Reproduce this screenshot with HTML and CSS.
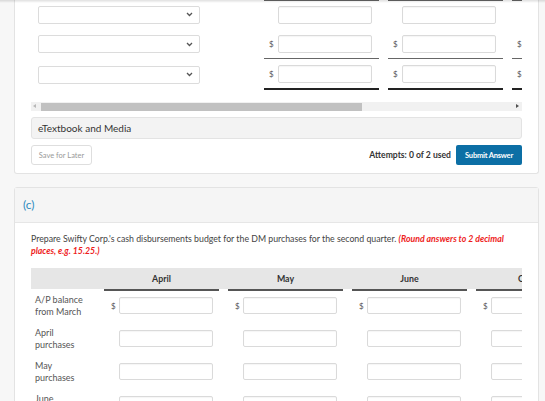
FILE: index.html
```html
<!DOCTYPE html>
<html lang="en">

<head>
 <meta charset="UTF-8">
 <meta name="viewport" content="width=device-width, initial-scale=1.0">
 <title>Cash disbursements budget</title>
 <link rel="stylesheet" href="styles.css">
</head>

<body>
 <div class="topshade"></div>

 <main class="page">

  <section class="card card-top">
   <div class="clip">
    <div class="srow first">
     <div class="lab"><div class="select"><svg width="7" height="5" viewBox="0 0 7 5"><path d="M1 1l2.5 2.5L6 1" fill="none" stroke="#555" stroke-width="1.3"/></svg></div></div>
     <div class="amt"><span class="cur"></span><input class="box" type="text"></div>
     <div class="amt"><span class="cur"></span><input class="box" type="text"></div>
     <div class="amt"><span class="cur"></span></div>
    </div>
    <div class="srow sub">
     <div class="lab"><div class="select"><svg width="7" height="5" viewBox="0 0 7 5"><path d="M1 1l2.5 2.5L6 1" fill="none" stroke="#555" stroke-width="1.3"/></svg></div></div>
     <div class="amt"><span class="cur">$</span><input class="box" type="text"></div>
     <div class="amt"><span class="cur">$</span><input class="box" type="text"></div>
     <div class="amt"><span class="cur">$</span></div>
    </div>
    <div class="srow total">
     <div class="lab"><div class="select"><svg width="7" height="5" viewBox="0 0 7 5"><path d="M1 1l2.5 2.5L6 1" fill="none" stroke="#555" stroke-width="1.3"/></svg></div></div>
     <div class="amt"><span class="cur">$</span><input class="box" type="text"></div>
     <div class="amt"><span class="cur">$</span><input class="box" type="text"></div>
     <div class="amt"><span class="cur">$</span></div>
    </div>
   </div>

   <div class="hbar">
    <span class="arr arr-left"></span>
    <span class="thumb"></span>
    <span class="arr arr-right"></span>
   </div>

   <div class="media">eTextbook and Media</div>

   <div class="actions">
    <button class="btn-save" type="button">Save for Later</button>
    <div class="submit-group">
     <span class="attempts">Attempts: 0 of 2 used</span>
     <button class="btn-submit" type="button">Submit Answer</button>
    </div>
   </div>
  </section>

  <section class="card card-c">
   <header class="part-head">(c)</header>
   <div class="part-body">
    <p class="prompt">Prepare Swifty Corp.'s cash disbursements budget for the DM purchases for the second quarter. <em class="hint">(Round answers to 2 decimal places, e.g. 15.25.)</em></p>

    <div class="clip">
     <div class="thead">
      <div class="tlab"></div>
      <div class="col">April</div>
      <div class="col">May</div>
      <div class="col">June</div>
      <div class="col">Quarter</div>
     </div>
     <div class="trow">
      <div class="tlab">A/P balance<br>from March</div>
      <div class="col"><span class="cur">$</span><input class="box" type="text"></div>
      <div class="col"><span class="cur">$</span><input class="box" type="text"></div>
      <div class="col"><span class="cur">$</span><input class="box" type="text"></div>
      <div class="col"><span class="cur">$</span><input class="box" type="text"></div>
     </div>
     <div class="trow">
      <div class="tlab">April<br>purchases</div>
      <div class="col"><span class="cur"></span><input class="box" type="text"></div>
      <div class="col"><span class="cur"></span><input class="box" type="text"></div>
      <div class="col"><span class="cur"></span><input class="box" type="text"></div>
      <div class="col"><span class="cur"></span><input class="box" type="text"></div>
     </div>
     <div class="trow">
      <div class="tlab">May<br>purchases</div>
      <div class="col"><span class="cur"></span><input class="box" type="text"></div>
      <div class="col"><span class="cur"></span><input class="box" type="text"></div>
      <div class="col"><span class="cur"></span><input class="box" type="text"></div>
      <div class="col"><span class="cur"></span><input class="box" type="text"></div>
     </div>
     <div class="trow">
      <div class="tlab">June<br>purchases</div>
      <div class="col"><span class="cur"></span><input class="box" type="text"></div>
      <div class="col"><span class="cur"></span><input class="box" type="text"></div>
      <div class="col"><span class="cur"></span><input class="box" type="text"></div>
      <div class="col"><span class="cur"></span><input class="box" type="text"></div>
     </div>
    </div>
   </div>
  </section>

 </main>
</body>

</html>
```

FILE: styles.css
```css
*,
*::before,
*::after {
 box-sizing: border-box;
}

body {
 margin: 0;
 background: #f7f7f7;
 font-family: Lato, 'Open Sans', 'Liberation Sans', sans-serif;
 color: #333;
 overflow: hidden;
}

.topshade {
 position: fixed;
 top: 0;
 left: 0;
 right: 0;
 height: 3px;
 background: linear-gradient(rgba(0, 0, 0, .12), rgba(0, 0, 0, 0));
}

.page {
 padding: 0 6px 0 14px;
}

.card {
 background: #fff;
 border: 1px solid #e3e3e3;
 border-radius: 3px;
}

.card-top {
 border-top: 0;
 border-radius: 0 0 3px 3px;
 padding: 0 16px 8px;
}

.clip {
 overflow: hidden;
}

/* top sheet */
.srow {
 display: flex;
 height: 30px;
 white-space: nowrap;
}

.srow.first {
 height: 29px;
}

.srow.total {
 height: 31px;
}

.lab {
 flex: none;
 width: 224px;
 padding-left: 7px;
 display: flex;
 align-items: center;
}

.select {
 width: 162px;
 height: 18px;
 border: 1px solid #dcdcdc;
 border-radius: 2px;
 background: #fff;
 display: flex;
 align-items: center;
 justify-content: flex-end;
 padding-right: 6px;
}

.amt {
 flex: none;
 width: 115px;
 margin-left: 9px;
 display: flex;
 align-items: center;
 padding-left: 5px;
}

.srow.first .amt {
 border-top: 1px solid #666;
}

.srow.sub .amt {
 border-bottom: 1px solid #666;
}

.srow.total .amt {
 border-bottom: 2px solid #222;
}

.cur {
 flex: none;
 width: 9px;
 font-size: 8px;
 color: #555;
}

.box {
 flex: none;
 width: 94px;
 height: 18px;
 margin: 0;
 padding: 0 4px;
 border: 1px solid #dadada;
 border-radius: 2px;
 background: #fff;
 box-shadow: inset 0 1px 1px rgba(0, 0, 0, .04);
 font: inherit;
}

/* fake horizontal scrollbar */
.hbar {
 display: flex;
 align-items: center;
 height: 9px;
 margin-top: 12px;
 background: #f1f1f1;
}

.arr {
 flex: none;
 width: 10px;
 height: 9px;
 position: relative;
}

.arr-left::after,
.arr-right::after {
 content: "";
 position: absolute;
 top: 2px;
 border: 2.5px solid transparent;
}

.arr-left::after {
 left: 2px;
 border-right: 3px solid #b8b8b8;
 border-left: 0;
}

.arr-right {
 margin-left: auto;
}

.arr-right::after {
 right: 3px;
 border-left: 3px solid #505050;
 border-right: 0;
}

.thumb {
 flex: none;
 width: 321px;
 height: 8px;
 background: #c1c1c1;
}

.media {
 margin-top: 6px;
 height: 22px;
 line-height: 20px;
 padding-left: 6px;
 border: 1px solid #e3e3e3;
 border-radius: 3px;
 background: #f3f3f3;
 font-size: 10px;
 color: #333;
}

.actions {
 margin-top: 6px;
 display: flex;
 justify-content: space-between;
 align-items: center;
}

.btn-save {
 width: 61px;
 height: 20px;
 padding: 0;
 border: 1px solid #dedede;
 border-radius: 3px;
 background: #fff;
 font: 7.5px Lato, sans-serif;
 color: #999;
}

.submit-group {
 display: flex;
 align-items: center;
 gap: 5px;
}

.attempts {
 font-size: 8.6px;
 font-weight: 700;
 color: #333;
}

.btn-submit {
 width: 66px;
 height: 20px;
 padding: 0;
 border: 0;
 border-radius: 2px;
 background: #0c6fa5;
 color: #fff;
 font: 700 7.5px Lato, sans-serif;
 letter-spacing: -.2px;
}

/* part c */
.card-c {
 margin-top: 13px;
 border-radius: 3px 3px 0 0;
}

.part-head {
 height: 35px;
 line-height: 34px;
 padding-left: 8px;
 background: #f5f5f5;
 border-bottom: 1px solid #e6e6e6;
 font-size: 12px;
 color: #2e8bc0;
}

.part-body {
 padding: 10px 16px 0;
}

.prompt {
 margin: 0 0 11px;
 padding-right: 16px;
 font-size: 8.75px;
 line-height: 12px;
 color: #444;
}

.hint {
 color: #ee1c1c;
 font-weight: 700;
}

.thead {
 display: flex;
 height: 21px;
 background: #e6e6e6;
 white-space: nowrap;
}

.tlab {
 flex: none;
 width: 73px;
 padding-left: 4px;
 font-size: 9px;
 line-height: 12px;
 color: #555;
 align-self: center;
}

.thead .col {
 height: 23px;
 border-bottom: 2px solid #555;
 padding-top: 5px;
 justify-content: center;
 align-items: flex-start;
 font-size: 8.8px;
 font-weight: 700;
 color: #333;
}

.col {
 flex: none;
 width: 115px;
 display: flex;
 align-items: center;
 padding-left: 7px;
}

.thead .col {
 padding-left: 0;
}

.col + .col {
 margin-left: 9px;
}

.trow {
 display: flex;
 height: 33px;
 white-space: nowrap;
}

.trow .cur {
 width: 8px;
}

.trow .box {
 height: 17px;
}
```
